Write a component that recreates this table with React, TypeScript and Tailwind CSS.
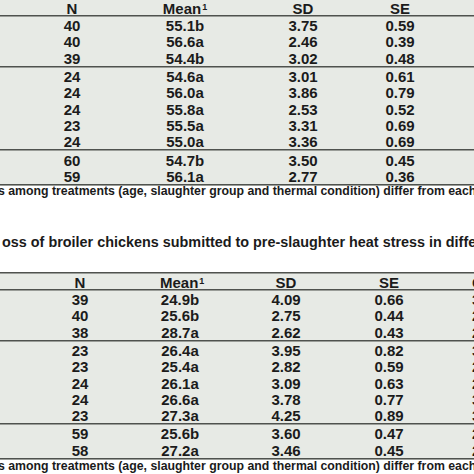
import React from 'react'

type Row = string[]

const T1_COLS = ['w-[144px]', 'w-[82px]', 'w-[154px]', 'w-[40px]']
const T2_COLS = ['w-[160px]', 'w-[40px]', 'w-[172px]', 'w-[34px]']

const TABLE1: Row[][] = [
  [
    ['40', '55.1b', '3.75', '0.59'],
    ['40', '56.6a', '2.46', '0.39'],
    ['39', '54.4b', '3.02', '0.48'],
  ],
  [
    ['24', '54.6a', '3.01', '0.61'],
    ['24', '56.0a', '3.86', '0.79'],
    ['24', '55.8a', '2.53', '0.52'],
    ['23', '55.5a', '3.31', '0.69'],
    ['24', '55.0a', '3.36', '0.69'],
  ],
  [
    ['60', '54.7b', '3.50', '0.45'],
    ['59', '56.1a', '2.77', '0.36'],
  ],
]

const TABLE2: Row[][] = [
  [
    ['39', '24.9b', '4.09', '0.66', '3.26'],
    ['40', '25.6b', '2.75', '0.44', '2.15'],
    ['38', '28.7a', '2.62', '0.43', '2.13'],
  ],
  [
    ['23', '26.4a', '3.95', '0.82', '3.57'],
    ['23', '25.4a', '2.82', '0.59', '2.11'],
    ['24', '26.1a', '3.09', '0.63', '2.18'],
    ['24', '26.6a', '3.78', '0.77', '3.24'],
    ['23', '27.3a', '4.25', '0.89', '3.56'],
  ],
  [
    ['59', '25.6b', '3.60', '0.47', '2.10'],
    ['58', '27.2a', '3.46', '0.45', '2.17'],
  ],
]

const Rule = () => <div className="h-[2px] bg-[#4f524e] border-b border-[#9a9d98]" />

function DataRow({ cells, cols, extra }: { cells: React.ReactNode[]; cols: string[]; extra?: boolean }) {
  return (
    <div className="flex h-[16.3px] items-center pt-[1px]">
      {cols.map((c, i) => (
        <div key={i} className={`${c} shrink-0 text-center`}>
          {cells[i]}
        </div>
      ))}
      {extra && <div className="ml-[66px] shrink-0 whitespace-nowrap">{cells[4]}</div>}
    </div>
  )
}

function StatTable({ groups, cols, extra, header }: { groups: Row[][]; cols: string[]; extra?: boolean; header: React.ReactNode[] }) {
  return (
    <div className="bg-[#e7eae5]">
      <div className="flex h-[15px] items-center pt-[2px]">
        {cols.map((c, i) => (
          <div key={i} className={`${c} shrink-0 text-center`}>
            {header[i]}
          </div>
        ))}
        {extra && <div className="ml-[66px] shrink-0">{header[4]}</div>}
      </div>
      {groups.map((g, gi) => (
        <div key={gi}>
          <Rule />
          {g.map((r, ri) => (
            <DataRow key={ri} cells={r} cols={cols} extra={extra} />
          ))}
        </div>
      ))}
      <Rule />
    </div>
  )
}

const mean = (
  <span>
    Mean<span className="text-[9px] relative top-[-4px] ml-[1px]">1</span>
  </span>
)

export default function App() {
  return (
    <div
      className="w-[474px] h-[474px] overflow-hidden bg-white text-[#1b1b1b] font-bold text-[15px] leading-none"
      style={{ fontFamily: '"Liberation Sans", Arial, sans-serif' }}
    >
      <StatTable groups={TABLE1} cols={T1_COLS} header={['N', mean, 'SD', 'SE']} />

      {/* footnote */}
      <div className="ml-[-2px] h-[11px] mt-[-1px] whitespace-nowrap text-[12.3px] leading-[12px]">
        s among treatments (age, slaughter group and thermal condition) differ from each other
      </div>

      {/* caption */}
      <div className="mt-[39px] pl-[2px] whitespace-nowrap text-[14.4px] leading-[14px]">
        oss of broiler chickens submitted to pre-slaughter heat stress in different
      </div>

      <div className="mt-[23px]">
        <Rule />
        <StatTable groups={TABLE2} cols={T2_COLS} extra header={['N', mean, 'SD', 'SE', 'CV']} />
      </div>

      <div className="ml-[-2px] whitespace-nowrap text-[12.3px] leading-[12px]">
        s among treatments (age, slaughter group and thermal condition) differ from each other
      </div>
    </div>
  )
}
